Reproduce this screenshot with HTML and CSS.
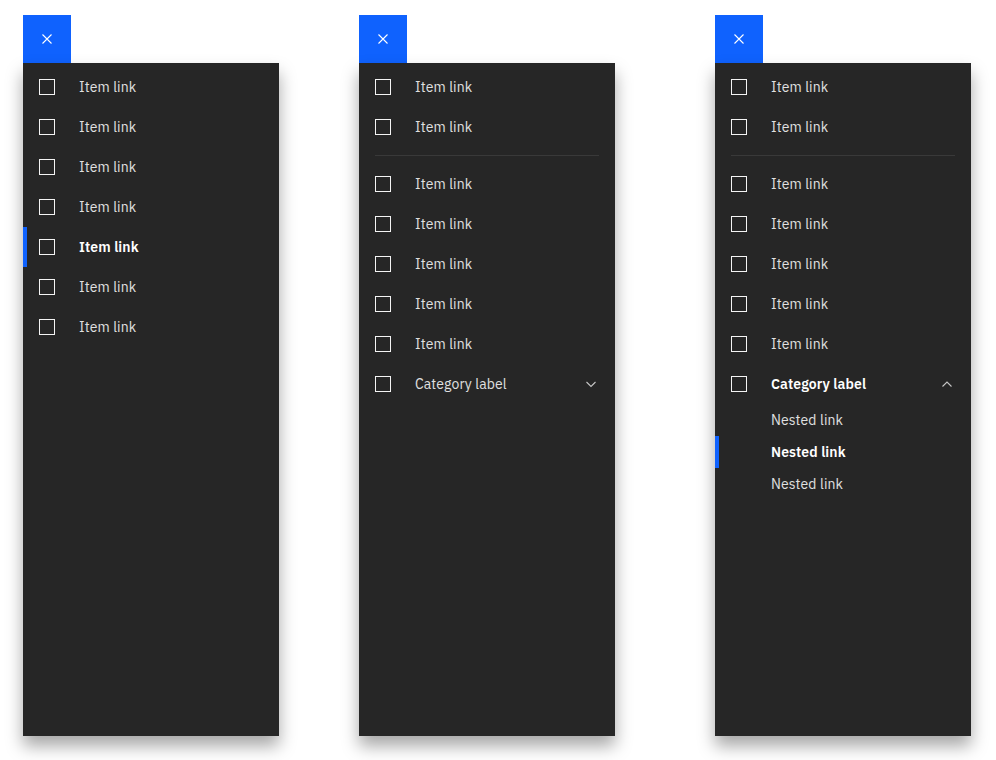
FILE: index.html
```html
<!DOCTYPE html>
<html>
<head>
<meta charset="utf-8">
<link rel="stylesheet" href="styles.css">
</head>
<body>
<div class="stage">
  <div class="col">
    <button class="close"><svg width="16" height="16" viewBox="0 0 16 16"><path d="M3.5 3.5l9 9M12.5 3.5l-9 9" stroke="#fff" stroke-width="1.1" fill="none"/></svg></button>
    <nav class="panel">
      <a class="item"><span class="box"></span><span class="label">Item link</span></a>
      <a class="item"><span class="box"></span><span class="label">Item link</span></a>
      <a class="item"><span class="box"></span><span class="label">Item link</span></a>
      <a class="item"><span class="box"></span><span class="label">Item link</span></a>
      <a class="item active"><span class="box"></span><span class="label">Item link</span></a>
      <a class="item"><span class="box"></span><span class="label">Item link</span></a>
      <a class="item"><span class="box"></span><span class="label">Item link</span></a>
    </nav>
  </div>
  <div class="col">
    <button class="close"><svg width="16" height="16" viewBox="0 0 16 16"><path d="M3.5 3.5l9 9M12.5 3.5l-9 9" stroke="#fff" stroke-width="1.1" fill="none"/></svg></button>
    <nav class="panel">
      <a class="item"><span class="box"></span><span class="label">Item link</span></a>
      <a class="item"><span class="box"></span><span class="label">Item link</span></a>
      <div class="divider"></div>
      <a class="item"><span class="box"></span><span class="label">Item link</span></a>
      <a class="item"><span class="box"></span><span class="label">Item link</span></a>
      <a class="item"><span class="box"></span><span class="label">Item link</span></a>
      <a class="item"><span class="box"></span><span class="label">Item link</span></a>
      <a class="item"><span class="box"></span><span class="label">Item link</span></a>
      <a class="item"><span class="box"></span><span class="label">Category label</span><svg class="chev" width="16" height="16" viewBox="0 0 16 16"><path d="M3.5 6l4.5 4.5L12.5 6" stroke="#c6c6c6" stroke-width="1.1" fill="none"/></svg></a>
    </nav>
  </div>
  <div class="col col-wide">
    <button class="close"><svg width="16" height="16" viewBox="0 0 16 16"><path d="M3.5 3.5l9 9M12.5 3.5l-9 9" stroke="#fff" stroke-width="1.1" fill="none"/></svg></button>
    <nav class="panel">
      <a class="item"><span class="box"></span><span class="label">Item link</span></a>
      <a class="item"><span class="box"></span><span class="label">Item link</span></a>
      <div class="divider"></div>
      <a class="item"><span class="box"></span><span class="label">Item link</span></a>
      <a class="item"><span class="box"></span><span class="label">Item link</span></a>
      <a class="item"><span class="box"></span><span class="label">Item link</span></a>
      <a class="item"><span class="box"></span><span class="label">Item link</span></a>
      <a class="item"><span class="box"></span><span class="label">Item link</span></a>
      <a class="item open"><span class="box"></span><span class="label">Category label</span><svg class="chev" width="16" height="16" viewBox="0 0 16 16"><path d="M3.5 10.5L8 6l4.5 4.5" stroke="#c6c6c6" stroke-width="1.1" fill="none"/></svg></a>
      <a class="nested">Nested link</a>
      <a class="nested active">Nested link</a>
      <a class="nested">Nested link</a>
    </nav>
  </div>
</div>
</body>
</html>
```
FILE: styles.css
```css
html, body {
  margin: 0;
  padding: 0;
  background: #ffffff;
}
body {
  font-family: "IBM Plex Sans", "Noto Sans", "Liberation Sans", sans-serif;
  font-size: 14px;
}
.stage {
  display: flex;
  gap: 80px;
  padding: 15px 0 24px 23px;
}
.col {
  display: flex;
  flex-direction: column;
  width: 256px;
  flex: none;
}
.col-wide {
  margin-left: 20px;
}
.close {
  width: 48px;
  height: 48px;
  border: 0;
  padding: 0;
  margin: 0;
  background: #0f62fe;
  display: flex;
  align-items: center;
  justify-content: center;
}
.close svg { display: block; }
.panel {
  height: 673px;
  box-sizing: border-box;
  padding-top: 4px;
  background: #262626;
  box-shadow: 0 10px 16px rgba(0, 0, 0, 0.35);
  display: flex;
  flex-direction: column;
}
.item {
  position: relative;
  height: 40px;
  display: flex;
  align-items: center;
  padding: 0 16px;
  color: #e0e0e0;
  letter-spacing: 0.1px;
}
.box {
  width: 16px;
  height: 16px;
  box-sizing: border-box;
  border: 1px solid #f4f4f4;
  margin-right: 24px;
  flex: none;
}
.label { flex: 1; }
.chev { flex: none; display: block; }
.item.active, .item.open, .nested.active {
  color: #ffffff;
  font-weight: 600;
}
.item.active::before, .nested.active::before {
  content: "";
  position: absolute;
  left: 0;
  top: 0;
  bottom: 0;
  width: 4px;
  background: #0f62fe;
}
.divider {
  height: 1px;
  background: #393939;
  margin: 8px 16px;
}
.nested {
  position: relative;
  height: 32px;
  display: flex;
  align-items: center;
  padding-left: 56px;
  color: #e0e0e0;
  letter-spacing: 0.1px;
}
```
